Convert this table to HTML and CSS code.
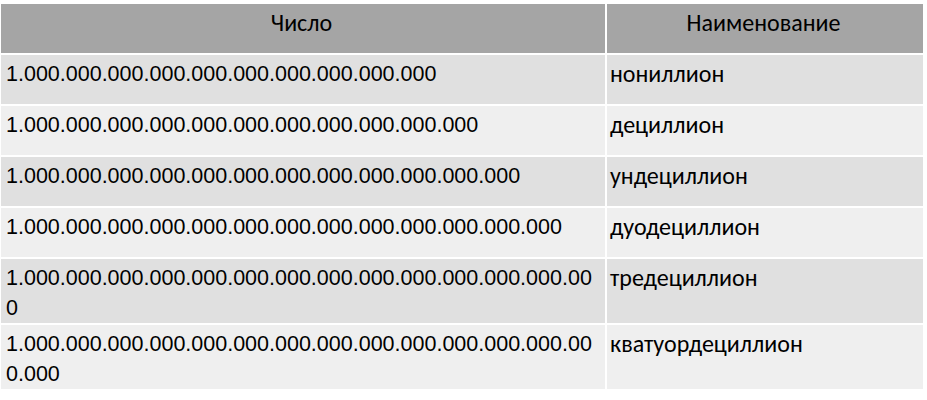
FILE: index.html
```html
<!DOCTYPE html>
<html lang="ru">
<head>
<meta charset="utf-8">
<title>Числа</title>
<link rel="stylesheet" href="styles.css">
</head>
<body>
<table class="nums">
  <colgroup><col class="c-num"><col class="c-name"></colgroup>
  <thead>
    <tr class="head"><th>Число</th><th>Наименование</th></tr>
  </thead>
  <tbody>
    <tr class="odd"><td class="num">1.000.000.000.000.000.000.000.000.000.000</td><td class="name">нониллион</td></tr>
    <tr class="even"><td class="num">1.000.000.000.000.000.000.000.000.000.000.000</td><td class="name">дециллион</td></tr>
    <tr class="odd"><td class="num">1.000.000.000.000.000.000.000.000.000.000.000.000</td><td class="name">ундециллион</td></tr>
    <tr class="even"><td class="num">1.000.000.000.000.000.000.000.000.000.000.000.000.000</td><td class="name">дуодециллион</td></tr>
    <tr class="odd"><td class="num">1.000.000.000.000.000.000.000.000.000.000.000.000.000.000</td><td class="name">тредециллион</td></tr>
    <tr class="even"><td class="num">1.000.000.000.000.000.000.000.000.000.000.000.000.000.000.000</td><td class="name">кватуордециллион</td></tr>
  </tbody>
</table>
</body>
</html>
```

FILE: styles.css
```css
html, body {
  margin: 0;
  padding: 0;
  background: #ffffff;
}

.nums {
  border-collapse: separate;
  border-spacing: 2px;
  table-layout: fixed;
  width: 926px;
  margin: 2px 0 0 -1px;
  color: #000;
}

.c-num { width: 604px; }
.c-name { width: 316px; }

.nums th,
.nums td {
  padding: 4px 8px 0 5px;
  vertical-align: top;
  line-height: 30px;
  text-align: left;
}

.nums th {
  font-family: "Carlito", "Open Sans", sans-serif;
  font-weight: normal;
  font-size: 24px;
  text-align: center;
  background: #a5a5a5;
}

.head { height: 49px; }

.odd, .even { height: 49px; }

.odd td { background: #e0e0e0; }
.even td { background: #efefef; }

.num {
  font-family: "Liberation Sans", Arial, sans-serif;
  font-size: 21.5px;
  word-break: break-all;
}

.nums td.name {
  font-family: "Carlito", "Open Sans", sans-serif;
  font-size: 24px;
  padding-left: 3px;
}
```
